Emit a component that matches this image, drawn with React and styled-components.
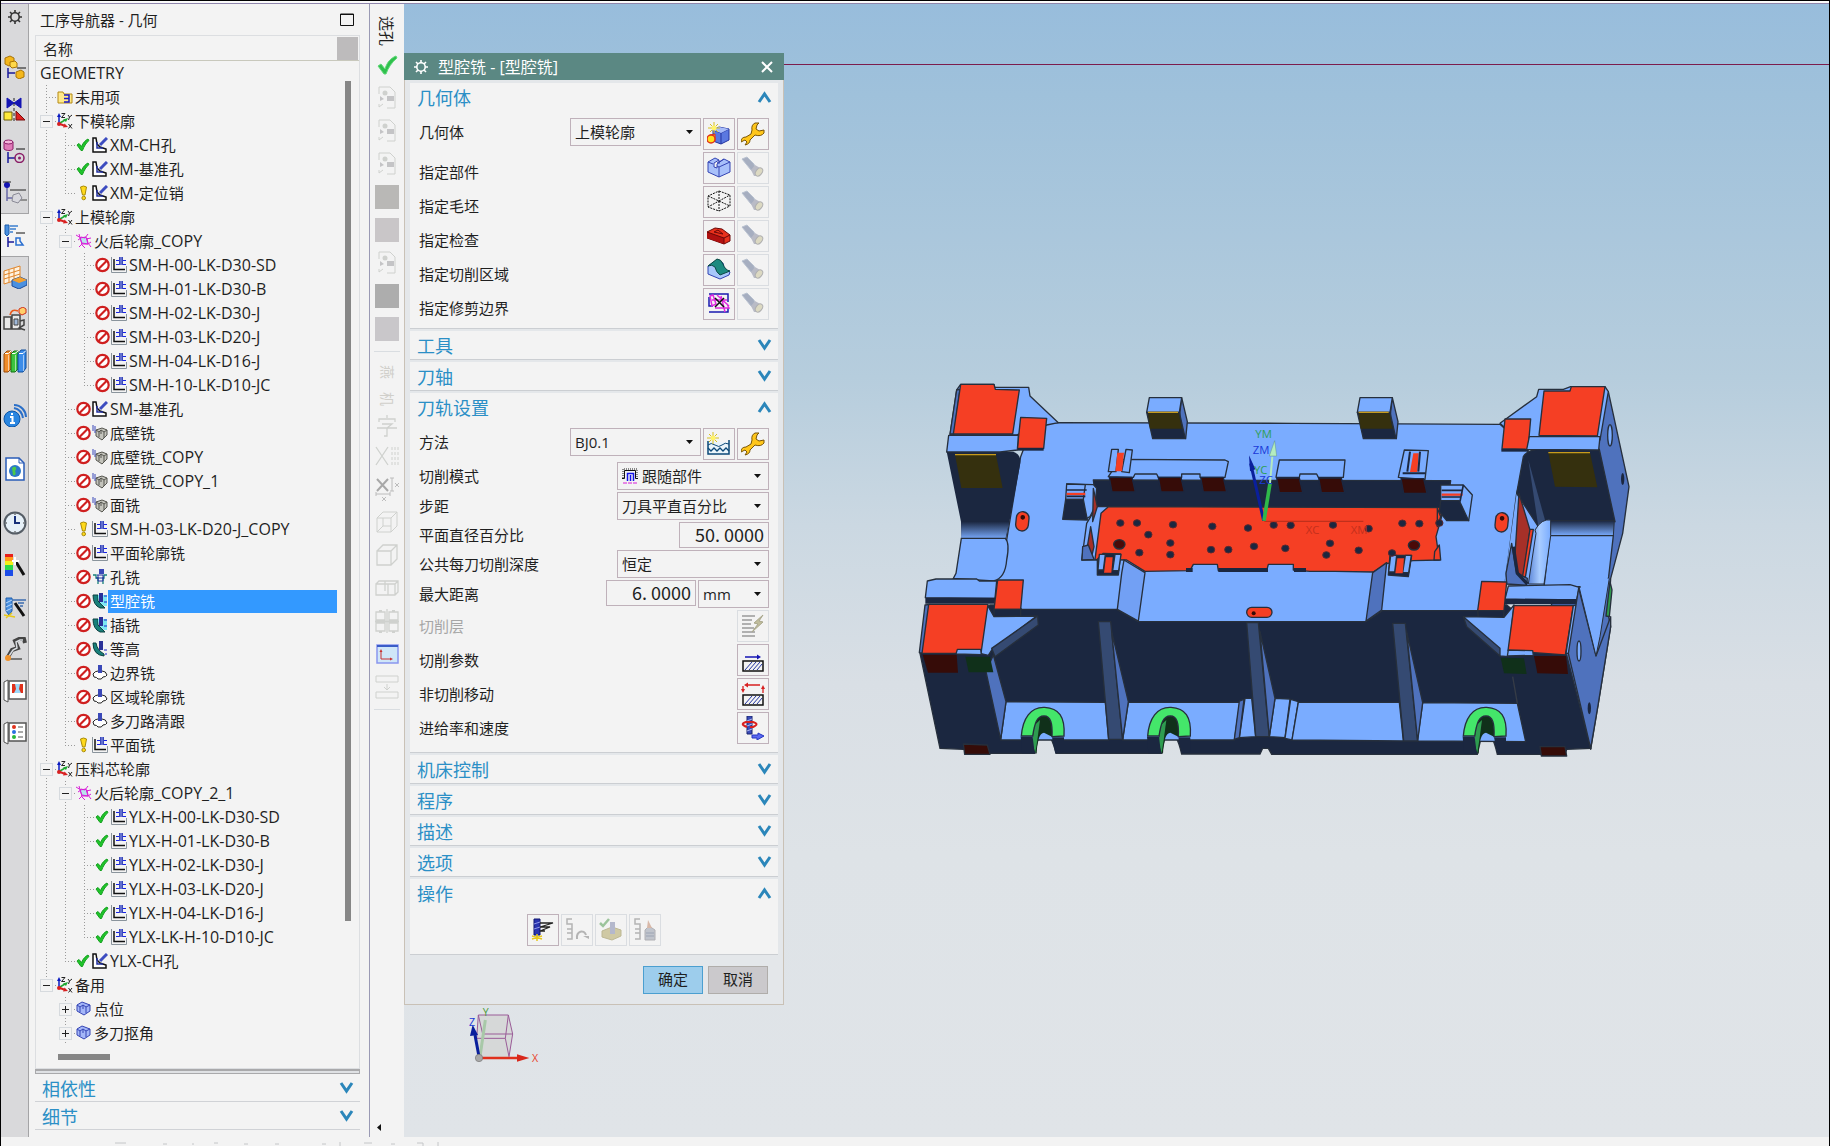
import React from "react";
import styled, { createGlobalStyle, css } from "styled-components";

const ui = '"Open Sans", "Noto Sans", "Noto Sans CJK SC", sans-serif';
const cjk = '"Noto Sans CJK SC", "Noto Sans", sans-serif';
const c = {
  panel: "#f3f3f3",
  ink: "#1f1f1f",
  blue: "#2b8fc6",
  line: "#d0d2d6",
  control: "#bfb1ba",
};

const GlobalStyle = createGlobalStyle`
  * { box-sizing: border-box; }
  body { margin: 0; font-family: ${ui}; font-size: 15px; color: ${c.ink}; background: ${c.panel}; }
  button, input, select { font: inherit; color: inherit; margin: 0; }
  button { padding: 0; border: 0; background: none; display: grid; place-items: center; }
  ul { list-style: none; margin: 0; padding: 0; }
  svg { display: block; }
`;

/* ---------- frame ---------- */
const Frame = styled.div`
  min-height: 100vh;
  display: flex;
  flex-direction: column;
  border: 1px solid #000;
  border-bottom: 0;
`;
const TopEdge = styled.div`
  height: 3px;
  background: #fafafa;
  border-bottom: 1px solid #8f86ac;
`;
const Work = styled.div`
  flex: 1;
  display: flex;
`;
const StatusBar = styled.footer`
  height: 9px;
  padding: 5px 0 0 112px;
  background: ${c.panel};
  overflow: hidden;
`;

/* ---------- resource rail ---------- */
const Rail = styled.nav`
  width: 28px;
  flex: none;
  background: #d9d9db;
  box-shadow: inset -1px 0 #a4a4a6;
`;
const RailGroup = styled.div`
  padding-bottom: ${(p) => p.$after || 0}px;
`;
const RailButton = styled.button`
  width: 28px;
  height: ${(p) => (p.$small ? 26 : 42)}px;
  background: ${(p) => (p.$active ? c.panel : "transparent")};
  ${(p) => p.$active && css`box-shadow: 0 -1px #a4a4a6, 0 1px #a4a4a6;`}
`;

/* ---------- navigator ---------- */
const Navigator = styled.aside`
  width: 341px;
  flex: none;
  display: flex;
  flex-direction: column;
  padding: 0 9px 7px 6px;
  background: ${c.panel};
  border-right: 1px solid #9a9ab4;
`;
const NavTitle = styled.header`
  height: 31px;
  padding: 0 6px 0 5px;
  display: flex;
  align-items: center;
  justify-content: space-between;
`;
const Title = styled.h1`
  margin: 0;
  font-size: 15px;
  line-height: 24px;
  font-weight: 400;
`;
const TreeFrame = styled.div`
  flex: 1;
  display: flex;
  flex-direction: column;
  border: 1px solid #dcdee1;
`;
const ColumnHead = styled.div`
  height: 25px;
  display: flex;
  align-items: center;
  justify-content: space-between;
  padding: 1px 1px 1px 7px;
  border-bottom: 1px solid #c8c8bc;
`;
const HeadCorner = styled.span`
  width: 21px;
  height: 23px;
  background: #bdbbbc;
`;
const TreeBody = styled.div`
  flex: 1;
  display: flex;
`;
const Tree = styled.ul`
  flex: 1;
`;
const ScrollColumn = styled.div`
  width: 22px;
  padding: 20px 8px 0;
`;
const ThumbY = styled.div`
  height: 87%;
  background: #868686;
`;
const ScrollRow = styled.div`
  height: 22px;
  padding: 8px 22px;
`;
const ThumbX = styled.div`
  width: 52px;
  height: 6px;
  background: #868686;
`;
const Row = styled.li`
  height: 24px;
  display: flex;
  align-items: center;
  padding-left: ${(p) => (p.$root ? 2 : 1)}px;
`;
const dotsY = "repeating-linear-gradient(#9a9a9a 0 1px, transparent 1px 3px)";
const dotsX = "repeating-linear-gradient(90deg, #9a9a9a 0 1px, transparent 1px 3px)";
const guide = {
  none: "none",
  pass: `${dotsY} 9px 0 / 1px 24px no-repeat`,
  tee: `${dotsY} 9px 0 / 1px 24px no-repeat, ${dotsX} 9px 12px / 10px 1px no-repeat`,
  end: `${dotsY} 9px 0 / 1px 12px no-repeat, ${dotsX} 9px 12px / 10px 1px no-repeat`,
};
const Guide = styled.span`
  width: 19px;
  height: 24px;
  flex: none;
  display: grid;
  place-items: center;
  background: ${(p) => guide[p.$kind]};
`;
const Expander = styled.button`
  width: 11px;
  height: 11px;
  background: ${c.panel};
  outline: 1px solid #d6dade;
`;
const IconCell = styled.span`
  width: 16px;
  margin-left: ${(p) => (p.$lead ? 1 : 0)}px;
  flex: none;
`;
const RowText = styled.span`
  flex: 1;
  height: 23px;
  line-height: 22px;
  padding-left: 2px;
  white-space: nowrap;
  color: ${(p) => (p.$selected ? "#fff" : c.ink)};
  background: ${(p) => (p.$selected ? "#3399ff" : "transparent")};
`;
const Latin = styled.span`
  font-size: 16px;
`;
const Splitter = styled.div`
  height: 5px;
  background: #dfe1e4;
  border: 1px solid #a9a9ab;
  border-width: 2px 1px 1px;
`;
const FoldButton = styled.button`
  height: 28px;
  width: 100%;
  display: flex;
  align-items: center;
  justify-content: space-between;
  padding: 0 6px 0 7px;
  color: ${c.blue};
  font-family: ${cjk};
  font-size: 18px;
  line-height: 26px;
  border-bottom: 1px solid ${c.line};
`;

/* ---------- tool strip ---------- */
const Strip = styled.nav`
  width: 34px;
  flex: none;
  display: flex;
  flex-direction: column;
  align-items: center;
  background: ${c.panel};
  padding-bottom: 4px;
`;
const StripTitle = styled.span`
  height: 44px;
  padding-top: 12px;
  font-size: 15px;
  line-height: 20px;
  writing-mode: vertical-rl;
  text-orientation: sideways;
`;
const StripButton = styled.button`
  width: 34px;
  height: ${(p) => (p.$short ? 27 : 33)}px;
`;
const StripGlyph = styled.span`
  writing-mode: vertical-rl;
  text-orientation: sideways;
  line-height: 20px;
  font-size: 14px;
  color: #d0cfca;
`;
const Swatch = styled.span`
  width: 24px;
  height: 24px;
  background: ${(p) => p.$tone};
`;
const StripRule = styled.hr`
  width: 26px;
  margin: 6px 0;
  border: 0;
  border-top: 1px solid #d9dde1;
`;
const StripMore = styled.button`
  margin-top: auto;
  width: 34px;
  height: 12px;
  padding-right: 16px;
`;

/* ---------- graphics window ---------- */
const Viewport = styled.main`
  flex: 1;
  min-width: 0;
  position: relative;
  overflow: hidden;
  background: linear-gradient(#98bddc 0%, #9fc1db 8%, #b6cddd 33%, #cbd8e2 46%, #d9dfe5 60%, #dee3e7 75%, #e0e4e8 100%);
`;
const HorizonLine = styled.div`
  position: absolute;
  top: 60px;
  left: 0;
  right: 0;
  height: 1px;
  background: #7c1c4c;
`;
const ModelPlace = styled.div`
  position: absolute;
  left: 496px;
  top: 356px;
`;
const TriadPlace = styled.div`
  position: absolute;
  left: 59px;
  top: 998px;
`;

/* ---------- dialog ---------- */
const Dialog = styled.section`
  position: absolute;
  left: 0;
  top: 49px;
  width: 380px;
  background: #e4e7ea;
  border: 1px solid #c9c1b6;
  border-top: 0;
`;
const DialogBar = styled.header`
  height: 27px;
  margin: 0 -1px;
  padding: 0 11px 0 10px;
  display: flex;
  align-items: center;
  gap: 10px;
  color: #fff;
  background: #5b8883;
`;
const DialogTitle = styled.h2`
  flex: 1;
  margin: 0;
  font-size: 16px;
  line-height: 24px;
  font-weight: 400;
`;
const Sections = styled.div`
  display: flex;
  flex-direction: column;
  gap: 2px;
  padding: 3px 5px 0;
`;
const Section = styled.section`
  background: ${c.panel};
  border-bottom: 1px solid #cbced2;
`;
const SectionBody = styled.div`
  display: flex;
  flex-direction: column;
  gap: 2px;
  padding: 7px 9px 8px;
`;
const SectionHead = styled(FoldButton)`
  border: 0;
`;
const Field = styled.div`
  display: flex;
  gap: 2px;
`;
const FieldLabel = styled.label`
  flex: 1;
  align-self: ${(p) => (p.$top ? "flex-start" : "center")};
  padding-top: ${(p) => (p.$low ? 8 : 0)}px;
  line-height: ${(p) => (p.$top ? 28 : 22)}px;
  font-family: ${cjk};
  color: ${(p) => (p.$off ? "#a6a6a6" : c.ink)};
`;
const SelectBox = styled.span`
  display: grid;
  align-items: center;
  width: ${(p) => p.$w}px;
  height: 28px;
  > * { grid-area: 1 / 1; }
  > svg { pointer-events: none; justify-self: end; margin-right: 8px; }
  > svg.lead { justify-self: start; margin: 0 0 0 5px; }
`;
const Select = styled.select`
  appearance: none;
  width: 100%;
  height: 28px;
  padding: 0 18px 0 ${(p) => (p.$icon ? 24 : 4)}px;
  border: 1px solid ${c.control};
  border-radius: 0;
  background: ${c.panel};
  outline: 0;
`;
const NumberInput = styled.input`
  width: 90px;
  height: 26px;
  padding: 0 4px 2px;
  border: 1px solid ${c.control};
  background: ${c.panel};
  text-align: right;
  font-family: ${cjk};
  font-size: 18px;
  outline: 0;
`;
const IconButton = styled.button`
  width: 32px;
  height: 32px;
  border: 1px solid ${(p) => (p.disabled ? "#dadde1" : c.control)};
`;
const Actions = styled.div`
  display: flex;
  justify-content: center;
  gap: 2px;
`;
const DialogFoot = styled.footer`
  display: flex;
  justify-content: flex-end;
  gap: 5px;
  padding: 11px 15px 10px;
`;
const FootButton = styled.button`
  width: 60px;
  height: 28px;
  line-height: 24px;
  align-content: start;
  background: ${(p) => (p.$primary ? "#9dcdec" : "#cbc9cc")};
  border: 1px solid ${(p) => (p.$primary ? "#4b9fd0" : "#b0adaa")};
`;

/* ---------- small drawings ---------- */
const Svg = ({ w, h, vb, children, ...r }) => (
  <svg width={w} height={h || w} viewBox={vb || `0 0 ${w} ${h || w}`} fill="none" aria-hidden="true" {...r}>{children}</svg>
);
const Chevron = ({ up }) => (
  <Svg w={15} h={12}><path d={up ? "M2 11 7.5 3 13 11" : "M2 1 7.5 9 13 1"} stroke="#2b86ba" strokeWidth="3" /></Svg>
);
const Caret = () => <Svg w={7} h={4}><path d="M0 0H7L3.500 4Z" fill="#111" /></Svg>;

const Gear = ({ color = "#333" }) => (
  <Svg w={14}>
    <circle cx="7" cy="7" r="4.200" stroke={color} strokeWidth="1.600" />
    <path d="M7 0V3M7 11V14M0 7H3M11 7H14M2 2 4 4M10 10 12 12M12 2 10 4M4 10 2 12" stroke={color} strokeWidth="1.600" />
  </Svg>
);

const rail = {
  assembly: <><path d="M2 3l5-2 4 2v6l-5 2-4-2z" fill="#f4b71c" stroke="#a87408" /><path d="M7 7l5-1 2 2v4l-5 1-2-2z" fill="#ffd84a" stroke="#a87408" /><path d="M14 13H23" stroke="#111" /><path d="M5 13V23M5 18H12" stroke="#1a1a9a" strokeWidth="1.500" /><path d="M13 17l5-2 3 2v5l-5 2-3-2z" fill="#f4b71c" stroke="#a87408" /></>,
  mirror: <><path d="M4 1 11 6 4 11ZM18 1 11 6 18 11Z" fill="#1414b4" stroke="#1414b4" /><path d="M11 1V24" stroke="#222" strokeDasharray="3 2" /><path d="M1 15H9V23H1Z" fill="#ffe93a" stroke="#6b5a08" /><path d="M13 14 22 23H13Z" fill="#e02222" stroke="#7a0c0c" /></>,
  part: <><path d="M1 3V10C3 12 9 12 10 10V3" fill="#e07ab8" stroke="#8a1c66" /><ellipse cx="5.500" cy="3" rx="4.500" ry="2" fill="#f4b4da" stroke="#8a1c66" /><path d="M13 10H22" stroke="#111" /><path d="M5 13V24M5 19H12" stroke="#1a1a9a" strokeWidth="1.500" /><circle cx="16.500" cy="19" r="4.500" stroke="#8a1c66" strokeWidth="1.500" /><circle cx="16.500" cy="19" r="1.500" fill="#8a1c66" /></>,
  constraint: <><path d="M4 4V20M4 17H9" stroke="#6a6aa8" strokeWidth="1.500" /><circle cx="4" cy="4" r="3" fill="#1414b4" /><path d="M0 1H8" stroke="#222" /><path d="M7 9H23" stroke="#222" /><path d="M15 19H24" stroke="#777" strokeWidth="1.500" /><path d="M10 14l6-2 3 5-4 5-6-2z" fill="#d8d8de" stroke="#8a8a96" /></>,
  operation: <><path d="M2 2H6V11L4 13 2 11Z" fill="#4a90e0" stroke="#1c5cab" /><path d="M7 3H15M7 6H13M7 9H10" stroke="#3c80d0" strokeWidth="1.500" /><path d="M13 10H22" stroke="#111" /><path d="M5 14V24M5 19H11" stroke="#1a1a9a" strokeWidth="1.500" /><path d="M13 15H17V18L20 22H13Z" stroke="#2a6fd0" strokeWidth="1.500" /></>,
  feature: <><path d="M1 6 17 1V14L1 19Z" fill="#fff3e0" stroke="#e0852a" /><path d="M1 10 17 5M1 14 17 9M6 5V17M11 3V16" stroke="#e0852a" /><path d="M9 15 17 12 24 15V20L16 24 9 21Z" fill="#4a90e0" stroke="#1c4c9a" /><path d="M9 15 17 12 24 15 16 18Z" fill="#f2a030" /></>,
  machine: <><path d="M1 10H8V22H1ZM9 8H17V22H9Z" fill="#e8e8e8" stroke="#444" strokeWidth="1.500" /><path d="M11 12H15V18H11Z" fill="#9fb8d8" stroke="#444" /><path d="M16 2l4-2 3 2v4l-4 2-3-2z" fill="#ffcf6a" stroke="#d0301c" /><path d="M15 4C10 2 8 4 7 8" stroke="#e85a1c" strokeWidth="1.500" /><path d="M17 14l4-1v5l-5 3 6 2" stroke="#444" strokeWidth="1.500" /></>,
  library: <><path d="M1 5 4 2H8V20L5 23H1Z" fill="#f08c2a" stroke="#9a4a08" /><path d="M8 5 11 2H15V20L12 23H8Z" fill="#3cc43c" stroke="#147014" /><path d="M15 5 18 1H23V19L20 23H15Z" fill="#3c8ce8" stroke="#0c4c9c" /><path d="M2 4.500H5.500L8 2M9 4.500H12L15 2M16 4.500H20L23 1.500" stroke="#fff" /><path d="M5.500 6V22M12.500 6V22M20.500 6V22" stroke="#ffffff88" /></>,
  info: <><circle cx="9" cy="16" r="8" fill="#2a86e0" stroke="#0c56a8" /><path d="M9 10V12M7 14H9.500V20M7 20H12" stroke="#fff" strokeWidth="2" /><path d="M11 2C18 2 23 8 23 14M11 5C16 6 19 9 20 15" stroke="#2a6fc8" strokeWidth="2" /></>,
  web: <><path d="M3 1H16L21 6V23H3Z" fill="#fff" stroke="#2a5cb8" strokeWidth="1.500" /><path d="M16 1V6H21" stroke="#2a5cb8" /><circle cx="12" cy="14" r="6" fill="#2a78c8" /><path d="M9 11C12 8 15 11 12 14 14 18 11 19 10 18Z" fill="#4ac84a" /></>,
  clock: <><circle cx="12" cy="12" r="10.500" fill="#e6f0f8" stroke="#555d66" strokeWidth="2" /><path d="M12 5V12H17" stroke="#16307a" strokeWidth="2" /><path d="M12 2.500V4M12 20V21.500M2.500 12H4M20 12H21.500" stroke="#333" /></>,
  rainbow: <><path d="M2 1H10V4H2Z" fill="#e8201c" /><path d="M2 4H10V8H2Z" fill="#ff9a1a" /><path d="M2 8H10V12H2Z" fill="#f4f01a" /><path d="M2 12H10V17H2Z" fill="#2ad84a" /><path d="M2 17H10V23H2Z" fill="#1c4ce8" /><path d="M13 9 21 22" stroke="#111" strokeWidth="3" /><path d="M9 8H16M12 4V12" stroke="#fff" strokeWidth="2" /></>,
  wizard: <><path d="M3 3H9V16L6 20 3 16Z" fill="#4a90e0" stroke="#1c5cab" /><path d="M3 8 9 5M3 12 9 9M3 16 9 13" stroke="#bcd8f8" /><path d="M9 5H23M15 8H21M17 11H20" stroke="#3c6cb0" strokeWidth="1.500" /><path d="M12 8 21 21" stroke="#111" strokeWidth="3" /><path d="M1 20 12 22M3 23 9 18" stroke="#e8c81c" strokeWidth="1.500" /></>,
  robot: <><path d="M5 20 9 13 15 11 12 4 16 2 21 2 22 6" stroke="#444" strokeWidth="4" /><path d="M6 19 10 13 14 11 13 5 17 3H20" stroke="#d8dce0" strokeWidth="1.500" /><path d="M3 22H19" stroke="#777" strokeWidth="2" /><circle cx="5" cy="21" r="3" fill="#f0922a" /></>,
  rolePic: <><path d="M1 3 5 1V23L1 21Z" fill="#fff" stroke="#555" /><path d="M6 2H23V20H6Z" fill="#fff" stroke="#555" strokeWidth="1.500" /><path d="M9 5H20V14H9Z" fill="#e0321c" /><path d="M12 5H17L16 10 18 14H11L13 10Z" fill="#9cd8f8" /></>,
  roleList: <><path d="M1 3 5 1V23L1 21Z" fill="#fff" stroke="#555" /><path d="M6 2H23V20H6Z" fill="#fff" stroke="#555" strokeWidth="1.500" /><circle cx="11" cy="6" r="2" fill="#e0321c" /><circle cx="11" cy="11" r="2" fill="#2a6fe0" /><circle cx="11" cy="16" r="2" fill="#2ab83c" /><path d="M15 6H20M15 11H20M15 16H20" stroke="#555" /></>,
};
const RailIcon = ({ name }) => <Svg w={24}>{rail[name]}</Svg>;

const mini = {
  ok: <path d="M1 8 3 6.500 5.500 9.500C7 6 9 3.500 12 2L13 3.500C10 6 8 9.500 6.500 13.500H5Z" fill="#1fc42a" stroke="#14a01f" />,
  warn: <><path d="M4.500 2Q7.500 0 10.500 2L9 10H6.500Z" fill="#ffd91a" stroke="#a88a08" /><circle cx="7.700" cy="13" r="1.800" fill="#ffd91a" stroke="#a88a08" /></>,
  no: <><circle cx="7.500" cy="8" r="6.200" stroke="#cf1f1f" strokeWidth="2.200" fill="#fff" /><path d="M3.500 12 11.500 4" stroke="#cf1f1f" strokeWidth="2.200" /></>,
  folder: <><path d="M1 3H6L7 5H15V14H1Z" fill="#ffe98a" stroke="#b58a14" /><path d="M7 6H12V13H7M7 9.500H12" stroke="#1a1ac8" strokeWidth="1.500" /></>,
  csys: <><path d="M2 0 4 4H0Z" fill="#0a1ac0" /><path d="M2 3V10" stroke="#0a1ac0" strokeWidth="1.500" /><path d="M3 10 8 7" stroke="#1ea832" strokeWidth="1.500" /><path d="M11 5 9 9 6 6.500Z" fill="#1ea832" /><path d="M3 11 7 12.500" stroke="#d82020" strokeWidth="2" /><path d="M11 14 6 14.500 7.500 10.500Z" fill="#d82020" /><circle cx="2" cy="11" r="2" fill="#d82020" /><path d="M4.500 .5H8L4.500 4.500H8M11 2 12.500 4 15 2M12.500 4 11.500 7M11.500 11 15 15.500M15 11 11.500 15.500" stroke="#222" /></>,
  drill: <><path d="M1 1V15H14V12L8 10 5 7 4 1Z" stroke="#111" strokeWidth="1.500" fill="#fff" /><path d="M15 1 8 8" stroke="#3c4cc0" strokeWidth="3" /><path d="M5 5V11H11" stroke="#2230a0" strokeWidth="1.500" /></>,
  mill: <><path d="M.5 0V15.500H15.500V9" stroke="#8a949c" /><path d="M3 2V12.500H14" stroke="#111" strokeWidth="1.500" /><path d="M8 0H12V8H8Z" fill="#3a48b8" /><path d="M5 3.500H8M12 3.500H15M5 7.500H8M12 7.500H15" stroke="#1822e8" /><path d="M10 0V8" stroke="#8c98e8" /></>,
  block: <><path d="M4 5 10 3 15 5V10L10 15 4 11Z" fill="#c4c4bc" stroke="#55554e" /><path d="M4 5 7 7 9 5 12 7 15 5M7 7V12M12 7V13M9 5V9" stroke="#55554e" /><path d="M1 0V6M3 1V8" stroke="#3a48b8" /></>,
  hole: <><path d="M7 0H12V5H7Z" fill="#3a48b8" /><path d="M1 6H4V9H6V15M15 6H12V9H11V15" stroke="#18807a" strokeWidth="1.300" /><path d="M5 6H11V12H6V6M4 9H12" stroke="#2230a0" /></>,
  cavity: <><path d="M1 2H6V8L13 15H8Q1 12 1 2Z" fill="#18807a" stroke="#0c4040" /><path d="M6 2H15V13H12Q7 10 6 4Z" fill="#7ce8f4" /><path d="M7 0H11V9H7Z" fill="#2a3098" /><path d="M12 3H15M12 9H15" stroke="#1822c8" /></>,
  zlevel: <><path d="M1 2H4Q5 9 12 13V15Q1 14 1 2Z" fill="#18807a" stroke="#0c4040" /><path d="M7 0H11V9H7Z" fill="#2a3098" /><path d="M12 9H15M13 13H15" stroke="#1822c8" /></>,
  contour: <><path d="M1 9Q3 6 6 6H10Q14 6 15 10 14 12 11 12 10 15 6 14 5 12 2 12Z" stroke="#222" fill="#fff" /><path d="M6 0H10V8H6Z" fill="#3a48b8" /></>,
  boundary: <><path d="M4 5 10 4 12 11 6 11Z" fill="#b8e4ec" stroke="#d81fd8" /><path d="M0 2 5 5 2 7M3 1 6 11 3 14M12 1 9 5 5 4M15 5 10 6M11 5 12 10 15 14M6 10 12 11 15 9M5 11 9 15" stroke="#d81fd8" /></>,
  bodies: <><path d="M1 4 6 1 14 4V10L8 14 1 10Z" fill="#a4b6f8" stroke="#3444b4" /><path d="M1 4 4 6 7 4 10 6 14 4M4 6V11M10 6V12M7 4V8" stroke="#3444b4" /></>,
};
const Mini = ({ name }) => <Svg w={16}>{mini[name]}</Svg>;

/* ---------- tree data: guides, icons, text, expander ---------- */
const T = "tee", E = "end", P = "pass", N = "none";
const n = (g, icons, text, more) => ({ g, icons, text, more });
const rows = [
  n([], [], "GEOMETRY"),
  n([T], ["folder"], "未用项"),
  n([T], ["csys"], "下模轮廓", "-"),
  n([P, T], ["ok", "drill"], "XM-CH孔"),
  n([P, T], ["ok", "drill"], "XM-基准孔"),
  n([P, E], ["warn", "drill"], "XM-定位销"),
  n([T], ["csys"], "上模轮廓", "-"),
  n([P, T], ["boundary"], "火后轮廓_COPY", "-"),
  ...["00-LK-D30-SD", "01-LK-D30-B", "02-LK-D30-J", "03-LK-D20-J", "04-LK-D16-J", "10-LK-D10-JC"].map((t, i) =>
    n([P, P, i === 5 ? E : T], ["no", "mill"], "SM-H-" + t)),
  n([P, T], ["no", "drill"], "SM-基准孔"),
  n([P, T], ["no", "block"], "底壁铣"),
  n([P, T], ["no", "block"], "底壁铣_COPY"),
  n([P, T], ["no", "block"], "底壁铣_COPY_1"),
  n([P, T], ["no", "block"], "面铣"),
  n([P, T], ["warn", "mill"], "SM-H-03-LK-D20-J_COPY"),
  n([P, T], ["no", "mill"], "平面轮廓铣"),
  n([P, T], ["no", "hole"], "孔铣"),
  n([P, T], ["no", "cavity"], "型腔铣"),
  n([P, T], ["no", "cavity"], "插铣"),
  n([P, T], ["no", "zlevel"], "等高"),
  n([P, T], ["no", "contour"], "边界铣"),
  n([P, T], ["no", "contour"], "区域轮廓铣"),
  n([P, T], ["no", "contour"], "多刀路清跟"),
  n([P, E], ["warn", "mill"], "平面铣"),
  n([T], ["csys"], "压料芯轮廓", "-"),
  n([P, T], ["boundary"], "火后轮廓_COPY_2_1", "-"),
  ...["YLX-H-00-LK-D30-SD", "YLX-H-01-LK-D30-B", "YLX-H-02-LK-D30-J", "YLX-H-03-LK-D20-J", "YLX-H-04-LK-D16-J", "YLX-LK-H-10-D10-JC"].map((t, i) =>
    n([P, P, i === 5 ? E : T], ["ok", "mill"], t)),
  n([P, E], ["ok", "drill"], "YLX-CH孔"),
  n([E], ["csys"], "备用", "-"),
  n([N, T], ["bodies"], "点位", "+"),
  n([N, T], ["bodies"], "多刀抠角", "+"),
];

function TreeRow({ row }) {
  const last = row.g.length - 1;
  const selected = row.text === "型腔铣";
  const parts = row.text.match(/[\x00-\x7f]+|[^\x00-\x7f]+/g);
  return (
    <Row role="treeitem" aria-selected={selected} $root={last < 0}>
      {row.g.map((kind, i) => (
        <Guide key={i} $kind={kind}>
          {i === last && row.more && (
            <Expander aria-label={row.text}>
              <Svg w={11}><path d={row.more === "+" ? "M2 5.500H9M5.500 2V9" : "M2 5.500H9"} stroke="#222" /></Svg>
            </Expander>
          )}
        </Guide>
      ))}
      {row.icons.map((name, i) => <IconCell key={name} $lead={i === 0}><Mini name={name} /></IconCell>)}
      <RowText $selected={selected}>
        {parts.map((t) => (t.charCodeAt(0) < 128 ? <Latin key={t}>{t}</Latin> : t))}
      </RowText>
    </Row>
  );
}

/* ---------- strip icons ---------- */
const g = "#cfd1ce";
const strip = {
  check: <path d="M3 13 6 11 10 16C12 9 16 5 21 3L22 5C17 9 13 15 11 21H9Z" fill="#2fc04c" stroke="#5fd878" />,
  doc: <><path d="M4 1H15L20 6V18M4 1V8M4 18V21L8 18" stroke={g} /><circle cx="10" cy="7" r="2.500" fill={g} /><path d="M5 10 9 13 5 15ZM12 10H19V15H12Z" fill="#c4c4c6" /><path d="M12 22H20V18" stroke={g} /></>,
  char: <><path d="M12 1V4M4 8V5H20V8M7 10H17L12 14V22H9M2 14H22" stroke={g} strokeWidth="1.300" /></>,
  xlist: <><path d="M1 3 13 21M13 3 1 21" stroke={g} strokeWidth="1.300" /><path d="M17 3V22M20 3V22M23 3V22" stroke={g} strokeDasharray="3 2" /></>,
  xdim: <><path d="M2 2 13 14M13 2 2 14" stroke="#a8a8a8" strokeWidth="2" /><path d="M17 1V14M15 1H19M15 14H19M1 17H15M1 15V19M15 15V19M20 6 24 10M24 6 20 10M7 20 11 24M11 20 7 24" stroke="#bcbcbc" /></>,
  cube1: <><path d="M2 8H16V22H2ZM2 8 8 2H22V16L16 22M22 2 16 8M8 8V16H16M8 16 2 22" stroke={g} /></>,
  cube2: <><path d="M2 8H16V22H2ZM2 8 8 2H22V16L16 22M22 2 16 8" stroke={g} strokeWidth="1.300" /></>,
  cube3: <><path d="M1 8H13V19H1ZM1 8 4 5H23V16L20 19H13M10 5V15M13 8H20V19M20 8 23 5" stroke={g} strokeWidth="1.300" /></>,
  four: <><path d="M1 3H10V11H1ZM14 3H23V11H14ZM1 14H10V22H1ZM14 14H23V22H14ZM12 0V24M0 12.500H24" stroke={g} strokeWidth="1.300" /><path d="M4 1H7V3H4ZM17 1H20V3H17ZM4 22H7V24H4ZM17 22H20V24H17Z" fill={g} /></>,
  window: <><path d="M2 3H23V21H2Z" fill="#cfe6f8" stroke="#8a96ee" strokeWidth="1.500" /><path d="M2 3H23V5H2Z" fill="#3a5cc8" /><path d="M6 9V17H16" stroke="#c83030" /><path d="M6 7 4.500 10H7.500ZM18 17 15 15.500V18.500Z" fill="#c83030" /></>,
  stack: <path d="M1 1H23V7H1ZM1 17H23V23H1ZM12 9V15M9 12 12 15 15 12" stroke={g} />,
};
const StripIcon = ({ name }) => <Svg w={24}>{strip[name]}</Svg>;

/* ---------- dialog icons ---------- */
const dlg = {
  newGeom: <><path d="M6 8 12 5 22 7V18L14 22 6 19Z" fill="#5a78e0" stroke="#2434a0" /><path d="M6 8 14 11 22 7M14 11V22" stroke="#2434a0" /><path d="M6 8 12 5 22 7 14 11Z" fill="#a8bcf8" /><path d="M3 13 8 12V19L4 20Z" fill="#ffb01a" stroke="#e0321c" /><circle cx="4" cy="17" r="4" fill="#ffe11a" stroke="#e0321c" strokeWidth="1.500" /><path d="M7 0V11M1 6H13M3 2 11 10M11 2 3 10" stroke="#d8c020" /><circle cx="7" cy="6" r="2.500" fill="#fff36a" /></>,
  wrench: <path d="M14 1Q10 3 11 8L10 12 5 15Q0 15 0 20L4 18 6 20 4 23Q9 22 9 18L14 13Q20 15 23 11V8L18 9 15 7 16 3 18 1Z" fill="#ffc61a" stroke="#7a5608" />,
  part: <><path d="M1 6 8 2 12 4 7 7 7 11 10 12V8L17 3 23 6V16L12 21 1 16Z" fill="#a8c0fa" stroke="#3444b4" /><path d="M1 6 6 8M12 11 23 6M10 10 12 11V21M12 4V8M17 3 10 7" stroke="#3444b4" /></>,
  blank: <><path d="M12 1 23 5V16L12 21 1 17V6Z M12 1V11L1 17M12 11 23 16M1 6 12 11 23 5M12 11V21" stroke="#111" strokeDasharray="2 1" /></>,
  check: <><path d="M0 8 8 4 15 5 23 11V17L17 20 0 14Z" fill="#e8301c" stroke="#6a0808" /><path d="M0 8V14L17 20V14Z" fill="#b01010" /><path d="M0 8 17 14 23 11M17 14V20M7 8 11 6 16 10Z" stroke="#6a0808" /></>,
  area: <><path d="M1 8 10 2 16 5Q17 13 23 14L22 17 13 21 1 16Z" fill="#a8c8fa" stroke="#3444b4" /><path d="M1 8 10 1Q14 1 16 6 18 12 23 13L13 17Q9 14 8 9 5 6 1 8Z" fill="#1c8a80" stroke="#0c4844" /></>,
  trim: <><path d="M2 2H21V10M2 5V14H6M2 20H21V16" stroke="#1a1ab0" strokeWidth="1.500" /><path d="M3 4 6 3 9 12 5 14ZM10 3 22 14M14 4 18 20M8 16H22L20 12M5 8H20" stroke="#e02ae0" strokeWidth="1.500" /><path d="M8 6 17 15M17 6 8 15" stroke="#111" strokeWidth="1.500" /></>,
  torch: <><path d="M1 3 6 1 13 8 15 15 10 14Z" fill="#a6aec0" stroke="#b9c2d0" /><path d="M10 14 14 9 21 13 18 20 13 20Z" fill="#b9bbc6" /><ellipse cx="18" cy="16" rx="3" ry="4.500" transform="rotate(38 18 16)" fill="#dcd9c2" stroke="#b0b0b0" /></>,
  method: <><path d="M1 10H22V22H1Z" fill="#eaf4fa" /><path d="M1 9V22H22V8" stroke="#0c4878" strokeWidth="1.500" /><path d="M1 13Q4 10 8 13T15 13T22 12" stroke="#0c4878" /><path d="M1 16 4 19 7 16 10 19 13 16 16 19 19 16 22 19" stroke="#0c4878" strokeWidth="1.300" /><path d="M6 0V12M0 6H12M2 2 10 10M10 2 2 10" stroke="#d8c020" /><circle cx="6" cy="6" r="2.500" fill="#fff36a" /></>,
  levels: <><path d="M1 2H14M1 6H11M1 10H10M1 14H13M1 18H14M1 22H14" stroke="#9a9a9a" strokeWidth="1.500" /><path d="M22 1 13 9 17 10 11 18 22 8 18 7Z" fill="#c0bd9c" stroke="#a9a78c" /></>,
  params: <><path d="M2 13H22V23H2Z" stroke="#111" strokeWidth="1.500" /><path d="M4 22 11 14M8 22 15 14M12 22 19 14M16 22 21 16" stroke="#2434a0" /><path d="M4 9H17" stroke="#1414b4" strokeWidth="1.500" /><path d="M20 9 16 6.500V11.500Z" fill="#1414b4" /></>,
  moves: <><path d="M2 13H22V23H2Z" stroke="#111" strokeWidth="1.500" /><path d="M4 22 11 14M8 22 15 14M12 22 19 14M16 22 21 16" stroke="#2434a0" /><path d="M6 3H19M2 4V8M22 5V11" stroke="#d82020" strokeWidth="1.300" /><path d="M3 3 7 .5V5.500ZM2 11 0 7H4ZM22 3 20 7H24Z" fill="#d82020" /></>,
  feeds: <><path d="M6 0H11V18H6Z" fill="#3a4cb8" stroke="#1a2470" /><path d="M6 5 11 3M6 10 11 8M6 15 11 13" stroke="#b0b8f0" /><path d="M6 11Q-2 8 5 6H12Q19 8 12 11L9 11" stroke="#d82020" strokeWidth="2" /><path d="M11 19V22H16V24L23 20 17 17V19Z" fill="#5a68f0" stroke="#2434c0" /></>,
  generate: <><path d="M3 1H9V17H3Z" fill="#2a34b0" stroke="#111670" /><path d="M3 6 9 4M3 11 9 9" stroke="#9098e8" /><path d="M9 5H22L9 9H19L9 13H14" stroke="#222" strokeWidth="1.300" /><path d="M1 18 11 21M11 18 1 21M6 16V23" stroke="#e8c81c" strokeWidth="1.500" /></>,
  replay: <><path d="M7 1H2V6H7V11H2M7 11V15H2M7 15V21H2" stroke="#b4b4b4" strokeWidth="1.500" /><path d="M12 21C11 13 19 11 21 17" stroke="#b4b4b4" strokeWidth="2" /><path d="M18 18H24V21Z" fill="#b4b4b4" /></>,
  verify: <><path d="M3 13 13 9 22 12V18L13 22 3 19Z" fill="#cfc9a4" stroke="#bdb894" /><path d="M11 4H16V16H11Z" fill="#b4b8cc" /><path d="M1 5 4 8 10 1" stroke="#9cc49c" strokeWidth="2.500" /></>,
  list: <><path d="M7 1H2V6H7V11H2M7 11V15H2M7 15V21H2" stroke="#b4b4b4" strokeWidth="1.500" /><path d="M12 12 16 8 22 12V22H12Z" fill="#c0c4cc" stroke="#b0b0b4" /><path d="M15 2 19 10H14Z" fill="#d8b8a8" /><path d="M13 15H21M13 18H21" stroke="#9ca4b4" /></>,
};
const DIcon = ({ name }) => <Svg w={24}>{dlg[name]}</Svg>;
const PatternIcon = () => (
  <Svg w={16} className="lead">
    <path d="M1 10V1H15V10" stroke="#888" strokeWidth="2" strokeDasharray="1 1" />
    <path d="M0 10.500H2.500V2.500H13.500V10.500H16" stroke="#111" />
    <path d="M5.500 13V5.500H11.500V13M8.500 13V7" stroke="#1414e8" strokeWidth="1.500" />
    <path d="M1 15H15" stroke="#d81fd8" strokeDasharray="4 1" />
  </Svg>
);

/* ---------- machined part ---------- */
const L = "#7aacff", D = "#1b2740", M = "#4f72bd", R = "#f53f24", K = "#360c08", O = "#35300e", B = "#354a72";
const Pg = ({ p, f, s = "#262f3c", w = 4 }) => <polygon points={p} fill={f} stroke={s} strokeWidth={w} strokeLinejoin="round" />;
const holesDark = [[661, 489], [711, 489], [745, 524], [819, 494], [811, 549], [718, 578], [811, 584], [937, 499], [933, 569], [985, 569], [1044, 504], [1062, 559], [1121, 495], [1172, 496], [1156, 565], [1299, 495], [1290, 550], [1279, 585], [1376, 571], [1406, 506], [1507, 490], [1558, 491], [1476, 579], [1618, 489]];

function Slot({ x }) {
  return (
    <g transform={`translate(${x} 0)`}>
      <path d="M-34 1128C-28 1090-22 1068 0 1068 20 1068 26 1090 24 1130L0 1118Q-20 1120-22 1182L-30 1170Z" fill="#10301a" />
      <path d="M-28 1095-12 1080-20 1140-26 1178-36 1150Z" fill="#2e9c50" />
      <path d="M-68 1128C-64 1075-40 1040 2 1042 44 1044 64 1070 60 1128L24 1130C26 1090 20 1068 0 1068-22 1068-28 1090-34 1128Z" fill="#44e66a" stroke="#262f3c" strokeWidth="4" />
      <path d="M-70 1130H-34L-28 1180H-66Z" fill={D} />
      <path d="M24 1132H60V1175L34 1180Z" fill={D} />
    </g>
  );
}

function Model() {
  return (
    <svg width="760" height="420" viewBox="0 0 2280 1260" role="img" aria-label="上模轮廓">
      <defs>
        <linearGradient id="bend" x1="0" y1="0" x2="0" y2="1"><stop offset="0" stopColor={D} /><stop offset="1" stopColor={L} /></linearGradient>
        <linearGradient id="bendX" x1="0" y1="0" x2="1" y2="0"><stop offset="0" stopColor="#5c86d8" /><stop offset=".5" stopColor="#a8ccff" /><stop offset="1" stopColor={L} /></linearGradient>
      </defs>
      {/* right flank */}
      <Pg p="2125,95 2187,380 2168,520 2132,655 2125,765 2132,800 2095,1030 2072,1168 1990,885 1900,500 2060,240" f={M} />
      <ellipse cx="2130" cy="226" rx="7" ry="32" fill={L} stroke="#262f3c" strokeWidth="4" />
      <ellipse cx="2168" cy="357" rx="5" ry="18" fill={D} />
      {/* front body with clamping slots */}
      <path d="M60 880 270 735 1820 735 2000 885 2072 1165 2000 1168 1995 1183 1792 1183C1782 1140 1772 1118 1758 1118S1742 1140 1732 1183L1115 1183 1105 1165H1088L1080 1182 845 1182C835 1140 825 1118 811 1118S792 1140 785 1180L468 1180C458 1140 446 1118 432 1118S412 1140 405 1180L270 1180 190 1168 120 1165Z" fill={D} stroke="#262f3c" strokeWidth="4" />
      <Pg p="190,1152 262,1155 270,1183 194,1183" f={K} /><Pg p="1920,1160 1995,1160 2000,1188 1924,1188" f={K} />
      {/* top plate */}
      <Pg p="475,188 1180,190 1800,193 1885,270 1850,400 1815,670 1735,752 1447,752 1397,785 715,785 650,748 365,748 290,665 320,540 345,390 362,290 400,190" f={L} />
      <Pg p="1850,400 1915,480 1952,480 1940,676 1812,676" f={L} s="none" />
      {/* lower shelves */}
      <Pg p="318,1025 616,1027 626,1140 302,1140" f={L} /><Pg p="685,1027 1020,1027 1003,1140 668,1140" f={L} />
      <Pg p="1035,1015 1055,1015 1067,1130 1018,1133" f={L} /><Pg p="1018,1023 1032,1018 1018,1133 1003,1138" f={M} />
      <Pg p="1125,1015 1170,1017 1155,1133 1108,1130" f={L} /><Pg p="1172,1018 1195,1025 1176,1140 1155,1135" f={L} />
      <Pg p="1195,1027 1498,1027 1510,1143 1176,1140" f={L} /><Pg p="1568,1028 1852,1030 1877,1145 1552,1143" f={L} />
      {/* ribs */}
      <Pg p="258,935 280,885 318,1025 302,1138" f={M} />
      <Pg p="595,785 632,785 668,1138 626,1138" f={B} /><Pg p="635,815 685,1025 668,1138" f={M} />
      <Pg p="1040,788 1075,788 1108,1130 1067,1130" f={B} /><Pg p="1080,815 1125,1015 1108,1130" f={M} />
      <Pg p="1478,790 1516,790 1553,1143 1511,1143" f={B} /><Pg p="1520,815 1568,1028 1553,1143" f={M} />
      <path d="M1838 950 1852 1030" stroke="#363c46" strokeWidth="4" />
      <Slot x={432} /><Slot x={811} /><Slot x={1758} />
      {/* rear left pillar */}
      <Pg p="170,90 182,73 282,73 284,82 386,82 390,108 475,188 440,195 350,225 150,225" f={L} />
      <Pg p="170,90 180,88 162,222 150,222" f={M} />
      <Pg p="182,73 282,73 286,88 358,90 338,222 160,222" f={R} />
      <Pg p="362,172 440,175 431,265 352,265" f={R} /><path d="M352 268H431" stroke={D} strokeWidth="8" />
      <path d="M140 275H340Q366 285 360 315L345 395 318 540 185 535 183 485Z" fill={D} />
      <Pg p="146,226 355,226 352,270 300,276 140,276" f={L} />
      <Pg p="165,284 288,284 308,384 184,384" f={O} s="none" /><path d="M165 284H288" stroke="#c79b1c" strokeWidth="4" />
      <path d="M184 485H328L316 537H184Z" fill="url(#bend)" /><path d="M184 535H316Q330 550 320 600 316 655 280 663L160 655 168 640Z" fill={L} stroke="#262f3c" strokeWidth="4" />
      {/* front left corner */}
      <Pg p="82,663 108,657 230,657 238,663 290,663 285,715 76,713" f={L} /><path d="M76 722H285" stroke={D} strokeWidth="18" />
      <Pg p="293,660 370,660 362,748 282,748" f={R} /><Pg p="282,748 362,748 362,774 282,770" f={D} />
      <Pg p="75,735 90,733 70,880 58,878" f={M} /><Pg p="262,735 282,770 410,768 275,870 265,886 240,880" f={L} />
      <Pg p="86,733 264,733 243,880 66,880" f={R} /><Pg p="172,868 242,868 244,884 168,882" f={L} />
      <Pg p="413,768 415,795 285,890 275,865" f={B} />
      <Pg p="68,884 170,884 174,938 84,938" f={K} s="none" /><Pg p="196,890 270,890 280,937 206,937" f="#10301a" s="none" />
      {/* rear lugs */}
      {[0, 632].map((x) => (
        <g key={x} transform={`translate(${x} 0)`}>
          <Pg p="845,113 862,185 857,236 838,206 840,154" f={M} /><Pg p="748,113 845,113 838,157 740,157" f={L} />
          <Pg p="740,157 838,157 856,236 758,236" f={D} /><Pg p="744,160 836,160 846,206 750,206" f={O} s="none" /><path d="M744 157H834" stroke="#c79b1c" strokeWidth="4" />
        </g>
      ))}
      {/* pocket */}
      <Pg p="580,360 1652,362 1640,445 590,440" f={D} />
      <Pg p="625,350 660,298 975,300 985,305 975,352 900,352 900,342 845,342 845,352 775,352 770,342 705,342 700,352" f={L} />
      <Pg p="1138,300 1335,300 1330,352 1255,352 1250,342 1200,342 1198,352 1128,352" f={L} />
      <Pg p="635,268 655,268 648,335 625,335" f={L} /><Pg p="678,268 697,270 688,338 665,335" f={L} /><Pg p="652,278 672,278 666,334 646,334" f={R} s="none" />
      <Pg p="1513,270 1585,272 1575,358 1495,352" f={L} /><Pg p="1540,280 1556,280 1552,336 1530,336" f={R} s="none" /><path d="M1508 340H1576M1530 275 1522 335M1560 275 1555 335" stroke={D} strokeWidth="6" />
      {[[628, 352], [775, 352], [902, 352], [1130, 354], [1256, 354], [1503, 356]].map(([x, y]) => (
        <Pg key={x} p={`${x},${y} ${x + 68},${y} ${x + 78},${y + 44} ${x + 8},${y + 44}`} f={K} s="#1b2740" />
      ))}
      <Pg p="590,440 625,440 605,600 545,600 560,490" f={L} />
      <Pg p="625,440 1620,443 1625,470 1608,530 1618,600 1540,602 1462,610 1420,636 1305,634 1230,634 1180,630 1180,613 1105,613 1100,632 955,632 952,613 880,613 870,632 735,634 680,600 585,598 603,460" f={R} />
      <path d="M858 630H878M955 630H1104M1182 630H1218" stroke={D} strokeWidth="12" />
      <Pg p="500,372 580,374 590,385 585,440 570,470 555,478" f={L} /><Pg p="500,372 556,374 550,418 497,418" f={L} /><Pg p="497,418 550,418 562,480 488,478" f={D} /><path d="M500 402H556" stroke={R} strokeWidth="7" /><path d="M500 390H560M500 409H556" stroke={D} strokeWidth="5" />
      <Pg p="580,385 592,440 578,485" f="#a63028" /><Pg p="572,500 582,560 575,590 562,560" f="#a63028" /><Pg p="548,560 565,555 582,598 546,600" f={M} />
      <Pg p="1622,375 1690,375 1717,405 1706,482 1622,445" f={L} /><Pg p="1622,422 1678,422 1706,482 1640,482 1618,455" f={D} /><path d="M1625 404H1688" stroke={R} strokeWidth="7" /><path d="M1625 391H1688M1690 375 1680 425M1625 411H1684" stroke={D} strokeWidth="5" />
      <Pg p="1612,445 1622,470 1612,500" f={R} /><Pg p="1604,575 1618,555 1622,600 1602,600" f={R} />
      <Pg p="592,598 610,580 662,582 655,645 592,645" f={D} /><Pg p="598,583 616,583 610,630 594,630" f={L} /><Pg p="645,583 663,583 656,632 638,632" f={L} /><Pg p="618,592 638,592 634,638 612,638" f={R} s="none" />
      <Pg p="1470,586 1535,586 1525,650 1465,645" f={D} /><Pg p="1472,586 1490,586 1484,636 1466,636" f={L} /><Pg p="1516,586 1534,586 1526,638 1508,638" f={L} /><Pg p="1492,595 1512,595 1508,640 1486,640" f={R} s="none" />
      <Pg p="672,600 735,638 715,783 652,748 665,640" f="#72a0f4" /><Pg p="1460,608 1418,638 1398,783 1445,750" f={M} />
      {holesDark.map(([x, y]) => <ellipse key={x + "-" + y} cx={x} cy={y} rx="11" ry="10" fill={D} stroke="#5a2a30" strokeWidth="3" />)}
      <ellipse cx="658" cy="553" rx="17" ry="14" fill="#4a0a08" stroke="#262f3c" strokeWidth="4" /><ellipse cx="1542" cy="556" rx="17" ry="14" fill="#4a0a08" stroke="#262f3c" strokeWidth="4" />
      {/* oblong holes */}
      {[[367, 484], [1805, 487]].map(([x, y]) => (
        <g key={x} transform={`rotate(6 ${x} ${y})`}><rect x={x - 19} y={y - 29} width="38" height="58" rx="19" fill={R} stroke="#262f3c" strokeWidth="4" /><circle cx={x} cy={y - 12} r="7" fill={K} /></g>
      ))}
      <rect x="1040" y="742" width="76" height="30" rx="15" fill={R} stroke="#262f3c" strokeWidth="4" /><circle cx="1061" cy="760" r="6" fill={K} />
      {/* rear right pillar */}
      <Pg p="1800,190 1910,110 1916,88 1990,88 2012,80 2115,80 2125,95 2100,240 1885,268" f={L} />
      <Pg p="1932,93 2010,93 2014,80 2115,80 2092,228 1917,226" f={R} />
      <Pg p="1815,177 1892,177 1884,268 1806,266" f={R} /><path d="M1804 271H1884" stroke={D} strokeWidth="8" />
      <path d="M1870 290Q1880 272 1910 268H2098L2145 485 1955 485 1915 500 1850 400Z" fill={D} stroke="#262f3c" strokeWidth="4" />
      <path d="M1885 300 1935 480 1915 500Z" fill={B} />
      <Pg p="1888,230 2100,230 2096,270 1880,268" f={L} />
      <Pg p="1945,278 2070,278 2092,382 1965,380" f={O} s="none" /><path d="M1945 278H2070" stroke="#c79b1c" strokeWidth="4" />
      <path d="M1950 482H2143L2140 527H1950Z" fill="url(#bend)" stroke="#262f3c" strokeWidth="3" />
      <path d="M1950 527H2140L2126 650 2088 888 2040 680H1932Z" fill={L} stroke="#262f3c" strokeWidth="4" />
      <path d="M1905 510Q1925 475 1952 480V527L1932 672H1885L1908 520Z" fill="url(#bendX)" stroke="#262f3c" strokeWidth="3" />
      <Pg p="1857,400 1890,510 1870,650 1842,630" f="#a63028" /><Pg p="1890,508 1900,508 1876,652 1868,648" f={R} />
      <Pg p="1835,550 1850,640 1882,655 1880,676 1820,672 1818,640" f={M} /><path d="M1840 560 1852 640 1882 672" stroke={D} strokeWidth="10" fill="none" />
      {/* front right corner */}
      <Pg p="1825,678 2010,674 2038,682 2030,720 1815,717" f={L} /><path d="M1815 725H2030" stroke={D} strokeWidth="16" />
      <Pg p="1745,664 1820,666 1812,752 1733,752" f={R} /><Pg p="1733,752 1812,752 1810,776 1735,772" f={D} />
      <Pg p="1690,770 1812,772 1842,735 1825,890 1800,888" f={L} /><Pg p="1690,770 1800,865 1800,888 1700,800" f={B} />
      <Pg p="1842,737 2020,737 1996,885 1824,872" f={R} /><Pg p="1825,870 1898,872 1900,886 1822,888" f={L} />
      <Pg p="2020,737 2032,735 2012,880 1998,880" f={L} />
      <Pg p="2036,684 2088,888 2132,770 2132,800 2095,1030 2072,1165 2005,880" f={M} />
      <path d="M2038 684 2088 888 2100 830 2128 655" fill={L} stroke="#262f3c" strokeWidth="3" />
      <Pg p="1802,893 1872,895 1880,942 1812,940" f="#10301a" s="none" /><Pg p="1902,888 1998,888 2004,942 1912,940" f={K} s="none" />
      <ellipse cx="2037" cy="873" rx="6" ry="30" fill={L} stroke="#262f3c" strokeWidth="4" /><ellipse cx="2068" cy="1045" rx="5" ry="18" fill={D} />
      <Pg p="2130,665 2136,690 2128,770 2118,768" f="#2f9a4c" />
      {/* coordinate system */}
      <path d="M1093 484H1390" stroke="#c0301c" strokeWidth="4" />
      <path d="M1091 482 1052 310" stroke="#0a1f9c" strokeWidth="9" /><path d="M1047 286 1066 328 1050 334Z" fill="#0a1f9c" />
      <path d="M1092 482 1110 370" stroke="#2fb84a" strokeWidth="11" /><path d="M1110 370 1117 290" stroke="#b4e8c0" strokeWidth="6" /><path d="M1124 242 1130 288H1108Z" fill="#b4ecc0" stroke="#4a7c5a" />
      <g fontFamily='"Open Sans", sans-serif' fontSize="34">
        <text x="1066" y="234" fill="#2e9e57">YM</text><text x="1058" y="281" fill="#1a3ad8">ZM</text>
        <text x="1062" y="342" fill="#2e9e57">YC</text><text x="1078" y="373" fill="#1a3ad8">ZC</text>
        <text x="1217" y="522" fill="#c4301c">XC</text><text x="1352" y="522" fill="#c4301c">XM</text>
      </g>
    </svg>
  );
}

function Triad() {
  return (
    <svg width="80" height="65" viewBox="309 816 240 195" role="img" aria-label="坐标系">
      <path d="M355 855H445L458 912 447 983H358L350 925Z" fill="#d6d8d8" />
      <path d="M355 855H445L458 912 447 980M445 855 436 925H350M355 855 368 912H458M436 925 447 980M355 855 350 925" stroke="#9a5c98" strokeWidth="3" fill="none" />
      <path d="M360 980 376 870" stroke="#a8c8a8" strokeWidth="9" />
      <path d="M357 980 345 915" stroke="#0a1f9c" strokeWidth="9" /><path d="M338 884 354 915 330 918Z" fill="#0a1f9c" />
      <path d="M362 984H475" stroke="#e0301c" strokeWidth="8" /><path d="M508 984 471 973V995Z" fill="#d8281c" />
      <circle cx="357" cy="984" r="11" fill="#a8a8a8" stroke="#777" strokeWidth="2" />
      <g fontFamily='"Open Sans", sans-serif' fontSize="32"><text x="327" y="889" fill="#1a3ad8">Z</text><text x="368" y="857" fill="#4c9c3c">Y</text><text x="516" y="996" fill="#e8442c">X</text></g>
    </svg>
  );
}

/* ---------- dialog pieces ---------- */
function Panel({ title, children }) {
  return (
    <Section>
      <SectionHead aria-expanded={!!children}>{title}<Chevron up={!!children} /></SectionHead>
      {children && <SectionBody>{children}</SectionBody>}
    </Section>
  );
}
function Choice({ id, value, w, icon, label }) {
  return (
    <SelectBox $w={w}>
      <Select id={id} aria-label={label} $icon={!!icon} defaultValue={value}><option>{value}</option></Select>
      {icon}
      <Caret />
    </SelectBox>
  );
}
function PickRow({ id, label, icon }) {
  return (
    <Field>
      <FieldLabel htmlFor={id} $low>{label}</FieldLabel>
      <IconButton id={id}><DIcon name={icon} /></IconButton>
      <IconButton disabled aria-label={label + " 显示"}><DIcon name="torch" /></IconButton>
    </Field>
  );
}
function ButtonRow({ id, label, icon, off }) {
  return (
    <Field>
      <FieldLabel htmlFor={id} $off={off}>{label}</FieldLabel>
      <IconButton id={id} disabled={off}><DIcon name={icon} /></IconButton>
    </Field>
  );
}

function MillDialog() {
  return (
    <Dialog role="dialog" aria-labelledby="dlg-title">
      <DialogBar>
        <Gear color="#fff" />
        <DialogTitle id="dlg-title">型腔铣 - [型腔铣]</DialogTitle>
        <button aria-label="关闭"><Svg w={12}><path d="M1 1 11 11M11 1 1 11" stroke="#fff" strokeWidth="2" /></Svg></button>
      </DialogBar>
      <Sections>
        <Panel title="几何体">
          <Field>
            <FieldLabel htmlFor="geom" $top>几何体</FieldLabel>
            <Choice id="geom" value="上模轮廓" w={131} />
            <IconButton aria-label="新建几何体"><DIcon name="newGeom" /></IconButton>
            <IconButton aria-label="编辑几何体"><DIcon name="wrench" /></IconButton>
          </Field>
          <PickRow id="p1" label="指定部件" icon="part" />
          <PickRow id="p2" label="指定毛坯" icon="blank" />
          <PickRow id="p3" label="指定检查" icon="check" />
          <PickRow id="p4" label="指定切削区域" icon="area" />
          <PickRow id="p5" label="指定修剪边界" icon="trim" />
        </Panel>
        <Panel title="工具" />
        <Panel title="刀轴" />
        <Panel title="刀轨设置">
          <Field>
            <FieldLabel htmlFor="method" $top>方法</FieldLabel>
            <Choice id="method" value="BJ0.1" w={131} />
            <IconButton aria-label="新建方法"><DIcon name="method" /></IconButton>
            <IconButton aria-label="编辑方法"><DIcon name="wrench" /></IconButton>
          </Field>
          <Field><FieldLabel htmlFor="mode">切削模式</FieldLabel><Choice id="mode" value="跟随部件" w={152} icon={<PatternIcon />} /></Field>
          <Field><FieldLabel htmlFor="step">步距</FieldLabel><Choice id="step" value="刀具平直百分比" w={152} /></Field>
          <Field><FieldLabel htmlFor="pct">平面直径百分比</FieldLabel><NumberInput id="pct" defaultValue="50. 0000" /></Field>
          <Field><FieldLabel htmlFor="depth">公共每刀切削深度</FieldLabel><Choice id="depth" value="恒定" w={152} /></Field>
          <Field>
            <FieldLabel htmlFor="dist">最大距离</FieldLabel>
            <NumberInput id="dist" defaultValue="6. 0000" />
            <Choice value="mm" w={71} label="单位" />
          </Field>
          <ButtonRow id="b1" label="切削层" icon="levels" off />
          <ButtonRow id="b2" label="切削参数" icon="params" />
          <ButtonRow id="b3" label="非切削移动" icon="moves" />
          <ButtonRow id="b4" label="进给率和速度" icon="feeds" />
        </Panel>
        <Panel title="机床控制" />
        <Panel title="程序" />
        <Panel title="描述" />
        <Panel title="选项" />
        <Panel title="操作">
          <Actions>
            <IconButton aria-label="生成"><DIcon name="generate" /></IconButton>
            <IconButton disabled aria-label="重播"><DIcon name="replay" /></IconButton>
            <IconButton disabled aria-label="确认"><DIcon name="verify" /></IconButton>
            <IconButton disabled aria-label="列表"><DIcon name="list" /></IconButton>
          </Actions>
        </Panel>
      </Sections>
      <DialogFoot>
        <FootButton $primary>确定</FootButton>
        <FootButton>取消</FootButton>
      </DialogFoot>
    </Dialog>
  );
}

const railMain = ["assembly", "mirror", "part", "constraint", "operation", "feature", "machine", "library"];
const railTools = ["clock", "rainbow", "wizard", "robot", "rolePic", "roleList"];
const RailItems = ({ names, after }) => (
  <RailGroup $after={after}>
    {names.map((name) => <RailButton key={name} aria-label={name} $active={name === "operation"}><RailIcon name={name} /></RailButton>)}
  </RailGroup>
);
const tones = { s1: "#b9b8b6", s2: "#c9c6c8", s3: "#adadad", s4: "#c9c7ca" };
const stripTop = ["check", "doc", "doc", "doc", "s1", "s2", "doc", "s3", "s4"];
const stripLow = ["xlist", "xdim", "cube1", "cube2", "cube3", "four", "window", "stack"];

export default function App() {
  return (
    <>
      <GlobalStyle />
      <Frame>
        <TopEdge />
        <Work>
          <Rail>
            <RailGroup $after={16}><RailButton $small aria-label="设置"><Gear /></RailButton></RailGroup>
            <RailItems names={railMain} after={12} />
            <RailItems names={["info"]} after={12} />
            <RailItems names={["web"]} after={12} />
            <RailItems names={railTools} />
          </Rail>
          <Navigator>
            <NavTitle>
              <Title>工序导航器 - 几何</Title>
              <button aria-label="最大化"><Svg w={14} h={13}><path d="M.5 1H13.500V12.500H.5Z" stroke="#111" /><path d="M0 1.500H14" stroke="#111" /></Svg></button>
            </NavTitle>
            <TreeFrame>
              <ColumnHead>名称<HeadCorner /></ColumnHead>
              <TreeBody>
                <Tree role="tree">{rows.map((row, i) => <TreeRow key={i} row={row} />)}</Tree>
                <ScrollColumn><ThumbY /></ScrollColumn>
              </TreeBody>
              <ScrollRow><ThumbX /></ScrollRow>
            </TreeFrame>
            <Splitter />
            <FoldButton>相依性<Chevron /></FoldButton>
            <FoldButton>细节<Chevron /></FoldButton>
          </Navigator>
          <Strip>
            <StripTitle>选孔</StripTitle>
            {stripTop.map((k, i) => (
              <StripButton key={i} aria-label={k}>{tones[k] ? <Swatch $tone={tones[k]} /> : <StripIcon name={k} />}</StripButton>
            ))}
            <StripRule />
            <StripButton $short><StripGlyph>燕</StripGlyph></StripButton>
            <StripButton $short><StripGlyph>机</StripGlyph></StripButton>
            <StripButton $short aria-label="字"><StripIcon name="char" /></StripButton>
            {stripLow.map((k) => <StripButton key={k} aria-label={k}><StripIcon name={k} /></StripButton>)}
            <StripRule />
            <StripMore aria-label="更多"><Svg w={4} h={7}><path d="M4 0V7L0 3.500Z" fill="#111" /></Svg></StripMore>
          </Strip>
          <Viewport>
            <HorizonLine />
            <ModelPlace><Model /></ModelPlace>
            <TriadPlace><Triad /></TriadPlace>
            <MillDialog />
          </Viewport>
        </Work>
        <StatusBar>
          <Svg w={328} h={4}><path d="M2 1H13M50 2H54M79 2H81M101 1H105M131 2H135M162 2H166M209 2H213M227 0V4M251 1H259M278 2H282M304 1H310V4M325 0V4" stroke="#c4c6c8" /></Svg>
        </StatusBar>
      </Frame>
    </>
  );
}
